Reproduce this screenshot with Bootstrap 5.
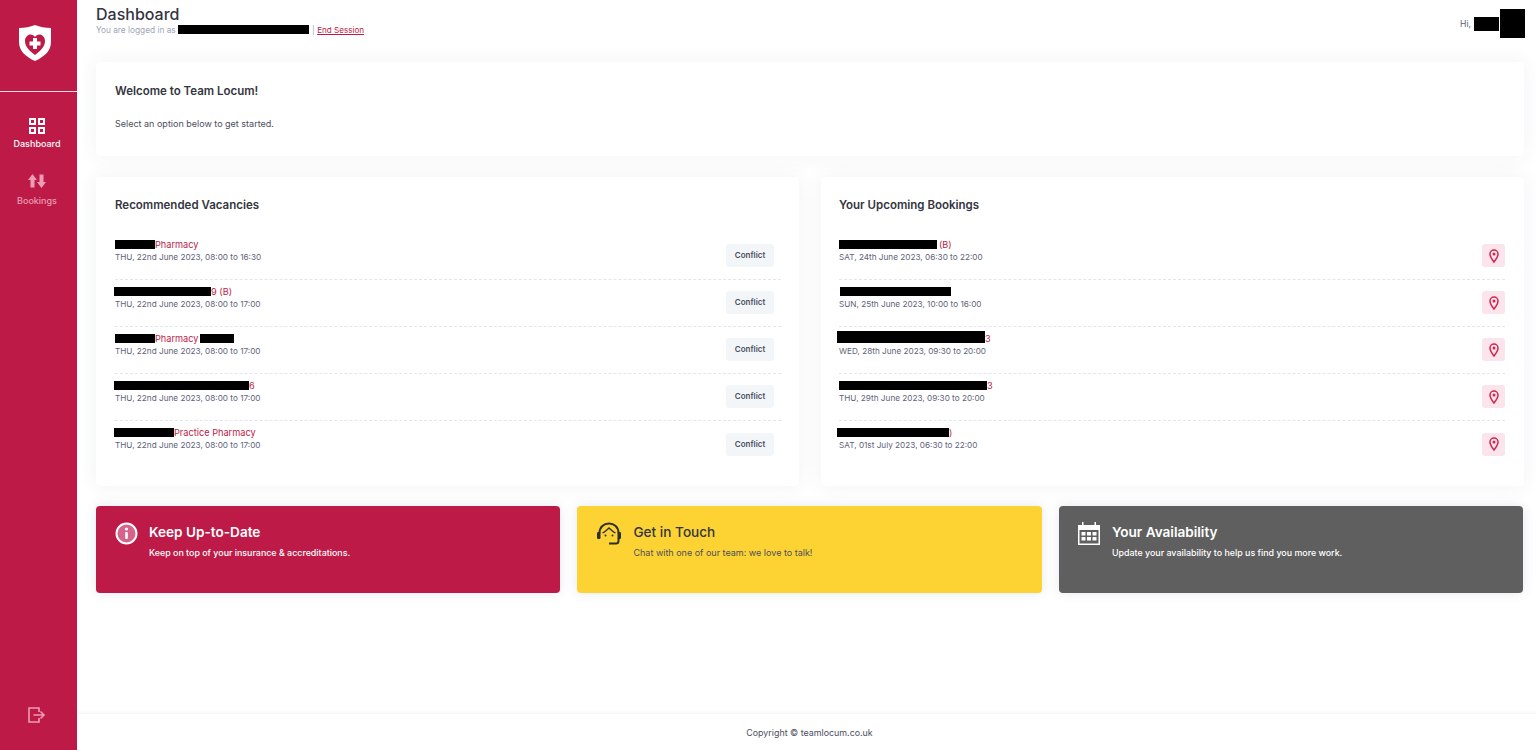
<!DOCTYPE html>
<html lang="en">
<head>
  <meta charset="utf-8" />
  <meta name="viewport" content="width=device-width, initial-scale=1" />
  <title>Dashboard - Team Locum</title>
  <link href="https://cdn.jsdelivr.net/npm/bootstrap@5.3.3/dist/css/bootstrap.min.css" rel="stylesheet">
  <style>
    body {
      font-family: "Inter", "Liberation Sans", sans-serif;
      color: #3f4254;
      background: #fff;
      font-size: 8.6px;
      min-height: 750px;
    }

    /* sidebar */
    .side-rail {
      width: 77px;
      height: 750px;
      flex: none;
      background: #bd1a47;
    }
    .side-logo {
      height: 92px;
      padding: 0 7px 6px 0;
      border-bottom: 1px solid #f7dbe3;
    }
    .side-link {
      color: #fff;
      font-size: 9px;
      font-weight: 500;
      height: 57px;
      padding-right: 3px;
      text-decoration: none;
    }
    .side-first { margin-top: 26px; height: 55px; gap: 3px; }
    .side-link.dim { color: #eb9db4; gap: 4px; }
    .side-link.dim span { padding-top: 1px; }
    .side-out { padding: 0 3px 27px 0; }

    /* header */
    .top-head { height: 43px; padding: 5px 11px 0 19px; }
    .page-name { font-size: 16px; font-weight: 500; line-height: 18px; color: #33353f; margin: 0; }
    .logged-as { font-size: 8.3px; line-height: 14px; color: #a1a5b7; }
    .logged-as a { color: #bd1a47; font-size: 8.1px; }
    .hi-user { font-size: 8.6px; color: #5e6278; margin-top: 12px; }
    .hide-name { width: 25px; height: 14px; margin: 0 1px 0 3px; }
    .hide-pic { width: 25px; height: 29px; margin-top: 4px; }

    /* redaction boxes */
    .rd { display: inline-block; background: #000; height: 9px; vertical-align: -1px; }
    .rd-mail { width: 131px; margin: 0 3px 0 0; }
    .w-34 { width: 34px; margin-left: 1px; }
    .w-40 { width: 40px; }
    .w-60 { width: 60px; margin-left: -1px; }
    .w-97 { width: 97px; margin-left: -1px; }
    .w-98 { width: 98px; margin-right: 2px; }
    .w-111 { width: 111px; margin-left: 1px; }
    .w-112 { width: 112px; margin-left: -2px; }
    .w-135 { width: 135px; margin-left: -1px; }
    .w-148 { width: 148px; }
    .w-149 { width: 148px; margin-left: -2px; height: 12px; }

    /* cards */
    .page-body { padding: 19px 12px 0 19px; }
    .soft-card {
      border: 0;
      border-radius: 4px;
      box-shadow: 0 0 20px rgba(56, 71, 109, .07);
    }
    .welcome-card { height: 94px; padding: 22px 19px 0; margin-bottom: 21px; }
    .card-heading { font-size: 11.5px; font-weight: 600; color: #33353f; margin: 0; line-height: 14px; }
    .welcome-text { margin: 19px 0 0; line-height: 13px; font-size: 9px; color: #4b4e5e; }
    .duo-grid { --bs-gutter-x: 22px; --bs-gutter-y: 0; margin-bottom: 20px; }
    .list-card { height: 309px; padding: 0 18px 18px 19px; }
    .list-right { padding: 0 19px 18px 18px; }
    .list-head { height: 56px; }
    .job-row {
      height: 47.5px;
      border-bottom: 1px dashed #e4e6ef;
    }
    .job-row:last-child { border-bottom: 0; }
    .job-text { padding-bottom: 10px; line-height: 13px; }
    .job-name { color: #bd1a47; font-size: 9.2px; }
    .job-date { color: #5e6278; font-size: 8.2px; }
    .conflict-btn {
      width: 48px;
      height: 23px;
      margin-right: 7px;
      padding: 0;
      border: 0;
      background: #f3f6f9;
      color: #4b4e5e;
      font-size: 8px;
      font-weight: 600;
      line-height: 21px;
      border-radius: 3px;
    }
    .pin-btn { width: 23px; height: 23px; background: #fbe4eb; border-radius: 3px; }
    .trio-grid { --bs-gutter-x: 17px; --bs-gutter-y: 0; margin-right: -7.9px; }
    .promo-card { height: 87px; padding: 16px 19px 0; border-radius: 4px; box-shadow: 0 0 12px rgba(56, 71, 109, .12); }
    .promo-red { background: #bd1a47; color: #fff; }
    .promo-yellow { background: #fdd334; color: #33353f; }
    .promo-grey { background: #5f5f5f; color: #fff; }
    .promo-icon { width: 34px; flex: none; }
    .promo-yellow .promo-icon { width: 37px; }
    .promo-title { font-size: 13.6px; font-weight: 600; line-height: 20px; margin: 0; }
    .promo-yellow .promo-title { font-weight: 500; }
    .promo-sub { font-size: 8.9px; line-height: 12px; margin: 5px 0 0; font-weight: 500; }
    .promo-yellow .promo-sub { font-weight: 400; font-size: 9px; color: #4b4e5e; }

    /* footer */
    .page-foot {
      height: 36px;
      padding: 2px 0 0 6px;
      font-size: 8.9px;
      color: #4b4e5e;
      box-shadow: 0 -1px 4px rgba(56, 71, 109, .07);
    }
  </style>
</head>
<body class="d-flex">

  <aside class="side-rail d-flex flex-column">
    <div class="side-logo d-flex align-items-center justify-content-center">
      <svg width="34" height="38" viewBox="0 0 34 38">
        <path d="M1 4C7 4 12 3 17 1c5 2 10 3 16 3v14c0 9-7 15-16 19C8 33 1 27 1 18z" fill="#fff"/>
        <path d="M17 31C12 27 7 23 7 17 7 13 10 10.500 12.500 10.500c2 0 3.500 1 4.500 2.500 1-1.500 2.500-2.500 4.500-2.500C24 10.500 27 13 27 17c0 6-5 10-10 14z" fill="#bd1a47"/>
        <path d="M15 14h4v3.500h3.500v4H19V25h-4v-3.500h-3.500v-4H15z" fill="#fff"/>
      </svg>
    </div>
    <a href="#" class="side-link side-first d-flex flex-column align-items-center">
      <svg width="16" height="16" viewBox="0 0 16 16" fill="none" stroke="#fff" stroke-width="2">
        <rect x="1" y="1" width="5" height="5"/><rect x="10" y="1" width="5" height="5"/>
        <rect x="1" y="10" width="5" height="5"/><rect x="10" y="10" width="5" height="5"/>
      </svg>
      <span>Dashboard</span>
    </a>
    <a href="#" class="side-link dim d-flex flex-column align-items-center">
      <svg width="20" height="16" viewBox="0 0 20 16" fill="#eb9db4">
        <path d="M5.500 1 10 7H7.500v7.500h-4V7H1z"/><path d="M14.500 15 19 9h-2.500V1.500h-4V9H10z"/>
      </svg>
      <span>Bookings</span>
    </a>
    <div class="side-out mt-auto d-flex justify-content-center">
      <svg width="18" height="16" viewBox="0 0 18 16" fill="none" stroke="#eb9db4" stroke-width="1.600">
        <path d="M11 5V1H1v14h10v-4"/><path d="M5.500 8H16M12.500 4.500 16 8l-3.500 3.500"/>
      </svg>
    </div>
  </aside>

  <div class="flex-grow-1 d-flex flex-column">
    <header class="top-head d-flex justify-content-between">
      <div>
        <h1 class="page-name">Dashboard</h1>
        <div class="logged-as">You are logged in as <span class="rd rd-mail"></span>| <a href="#">End Session</a></div>
      </div>
      <div class="d-flex align-items-start">
        <span class="hi-user d-flex align-items-center">Hi,<span class="hide-name bg-black"></span></span>
        <span class="hide-pic bg-black"></span>
      </div>
    </header>

    <main class="page-body">
      <section class="card soft-card welcome-card">
        <h2 class="card-heading">Welcome to Team Locum!</h2>
        <p class="welcome-text">Select an option below to get started.</p>
      </section>

      <div class="row duo-grid">
        <div class="col-6">
          <section class="card soft-card list-card">
            <div class="list-head d-flex align-items-center"><h2 class="card-heading">Recommended Vacancies</h2></div>
            <div class="job-row d-flex align-items-center justify-content-between">
              <div class="job-text"><div class="job-name"><span class="rd w-40"></span>Pharmacy</div><div class="job-date">THU, 22nd June 2023, 08:00 to 16:30</div></div>
              <button class="btn conflict-btn">Conflict</button>
            </div>
            <div class="job-row d-flex align-items-center justify-content-between">
              <div class="job-text"><div class="job-name"><span class="rd w-97"></span>9 (B)</div><div class="job-date">THU, 22nd June 2023, 08:00 to 17:00</div></div>
              <button class="btn conflict-btn">Conflict</button>
            </div>
            <div class="job-row d-flex align-items-center justify-content-between">
              <div class="job-text"><div class="job-name"><span class="rd w-40"></span>Pharmacy<span class="rd w-34"></span></div><div class="job-date">THU, 22nd June 2023, 08:00 to 17:00</div></div>
              <button class="btn conflict-btn">Conflict</button>
            </div>
            <div class="job-row d-flex align-items-center justify-content-between">
              <div class="job-text"><div class="job-name"><span class="rd w-135"></span>6</div><div class="job-date">THU, 22nd June 2023, 08:00 to 17:00</div></div>
              <button class="btn conflict-btn">Conflict</button>
            </div>
            <div class="job-row d-flex align-items-center justify-content-between">
              <div class="job-text"><div class="job-name"><span class="rd w-60"></span>Practice Pharmacy</div><div class="job-date">THU, 22nd June 2023, 08:00 to 17:00</div></div>
              <button class="btn conflict-btn">Conflict</button>
            </div>
          </section>
        </div>
        <div class="col-6">
          <section class="card soft-card list-card list-right">
            <div class="list-head d-flex align-items-center"><h2 class="card-heading">Your Upcoming Bookings</h2></div>
            <div class="job-row d-flex align-items-center justify-content-between">
              <div class="job-text"><div class="job-name"><span class="rd w-98"></span>(B)</div><div class="job-date">SAT, 24th June 2023, 06:30 to 22:00</div></div>
              <span class="pin-btn d-flex align-items-center justify-content-center"><svg width="10" height="14" viewBox="0 0 10 14"><path d="M5 13C3 10.500 1 8 1 5a4 4 0 0 1 8 0C9 8 7 10.500 5 13z" fill="none" stroke="#d0264f" stroke-width="1.500"/><circle cx="5" cy="5" r="1.500" fill="#d0264f"/></svg></span>
            </div>
            <div class="job-row d-flex align-items-center justify-content-between">
              <div class="job-text"><div class="job-name"><span class="rd w-111"></span></div><div class="job-date">SUN, 25th June 2023, 10:00 to 16:00</div></div>
              <span class="pin-btn d-flex align-items-center justify-content-center"><svg width="10" height="14" viewBox="0 0 10 14"><path d="M5 13C3 10.500 1 8 1 5a4 4 0 0 1 8 0C9 8 7 10.500 5 13z" fill="none" stroke="#d0264f" stroke-width="1.500"/><circle cx="5" cy="5" r="1.500" fill="#d0264f"/></svg></span>
            </div>
            <div class="job-row d-flex align-items-center justify-content-between">
              <div class="job-text"><div class="job-name"><span class="rd w-149"></span>3</div><div class="job-date">WED, 28th June 2023, 09:30 to 20:00</div></div>
              <span class="pin-btn d-flex align-items-center justify-content-center"><svg width="10" height="14" viewBox="0 0 10 14"><path d="M5 13C3 10.500 1 8 1 5a4 4 0 0 1 8 0C9 8 7 10.500 5 13z" fill="none" stroke="#d0264f" stroke-width="1.500"/><circle cx="5" cy="5" r="1.500" fill="#d0264f"/></svg></span>
            </div>
            <div class="job-row d-flex align-items-center justify-content-between">
              <div class="job-text"><div class="job-name"><span class="rd w-148"></span>3</div><div class="job-date">THU, 29th June 2023, 09:30 to 20:00</div></div>
              <span class="pin-btn d-flex align-items-center justify-content-center"><svg width="10" height="14" viewBox="0 0 10 14"><path d="M5 13C3 10.500 1 8 1 5a4 4 0 0 1 8 0C9 8 7 10.500 5 13z" fill="none" stroke="#d0264f" stroke-width="1.500"/><circle cx="5" cy="5" r="1.500" fill="#d0264f"/></svg></span>
            </div>
            <div class="job-row d-flex align-items-center justify-content-between">
              <div class="job-text"><div class="job-name"><span class="rd w-112"></span>)</div><div class="job-date">SAT, 01st July 2023, 06:30 to 22:00</div></div>
              <span class="pin-btn d-flex align-items-center justify-content-center"><svg width="10" height="14" viewBox="0 0 10 14"><path d="M5 13C3 10.500 1 8 1 5a4 4 0 0 1 8 0C9 8 7 10.500 5 13z" fill="none" stroke="#d0264f" stroke-width="1.500"/><circle cx="5" cy="5" r="1.500" fill="#d0264f"/></svg></span>
            </div>
          </section>
        </div>
      </div>

      <div class="row trio-grid">
        <div class="col-4">
          <section class="promo-card promo-red d-flex">
            <div class="promo-icon">
              <svg width="23" height="23" viewBox="0 0 23 23"><circle cx="11.500" cy="11.500" r="10" fill="#d5638a" stroke="#fff" stroke-width="2"/><rect x="10.200" y="10" width="2.600" height="7" rx="1" fill="#fff"/><circle cx="11.500" cy="7" r="1.600" fill="#fff"/></svg>
            </div>
            <div><h3 class="promo-title">Keep Up-to-Date</h3><p class="promo-sub">Keep on top of your insurance &amp; accreditations.</p></div>
          </section>
        </div>
        <div class="col-4">
          <section class="promo-card promo-yellow d-flex">
            <div class="promo-icon">
              <svg width="26" height="23" viewBox="0 0 26 23" fill="none" stroke="#2f2f2f" stroke-width="2">
                <path d="M3.500 11C3.500 5 8 1.500 13 1.500S22.500 5 22.500 11"/>
                <path d="M6.500 11C9 10 11 8 13 6c2 2 4 4 6.500 5" stroke-width="1.300"/>
                <path d="M22.500 16v3c0 1.500-1 2.500-2.500 2.500h-7"/>
                <rect x="1" y="10" width="3.500" height="7" rx="1.200" fill="#2f2f2f" stroke="none"/><rect x="21.500" y="10" width="3.500" height="7" rx="1.200" fill="#2f2f2f" stroke="none"/>
                <circle cx="9.500" cy="13.500" r="1" fill="#2f2f2f" stroke="none"/><circle cx="16.500" cy="13.500" r="1" fill="#2f2f2f" stroke="none"/>
              </svg>
            </div>
            <div><h3 class="promo-title">Get in Touch</h3><p class="promo-sub">Chat with one of our team: we love to talk!</p></div>
          </section>
        </div>
        <div class="col-4">
          <section class="promo-card promo-grey d-flex">
            <div class="promo-icon">
              <svg width="22" height="23" viewBox="0 0 22 23" fill="#fff">
                <path d="M0 3h4V0h1.500v3h11V0H18v3h4v20H0zm1.500 5v13.500h19V8z"/>
                <rect x="3.500" y="10" width="4" height="3.500"/><rect x="9" y="10" width="4" height="3.500"/><rect x="14.500" y="10" width="4" height="3.500"/>
                <rect x="3.500" y="15" width="4" height="3.500"/><rect x="9" y="15" width="4" height="3.500"/><rect x="14.500" y="15" width="4" height="3.500"/>
              </svg>
            </div>
            <div><h3 class="promo-title">Your Availability</h3><p class="promo-sub">Update your availability to help us find you more work.</p></div>
          </section>
        </div>
      </div>
    </main>

    <footer class="page-foot mt-auto d-flex align-items-center justify-content-center">Copyright © teamlocum.co.uk</footer>
  </div>

</body>
</html>
